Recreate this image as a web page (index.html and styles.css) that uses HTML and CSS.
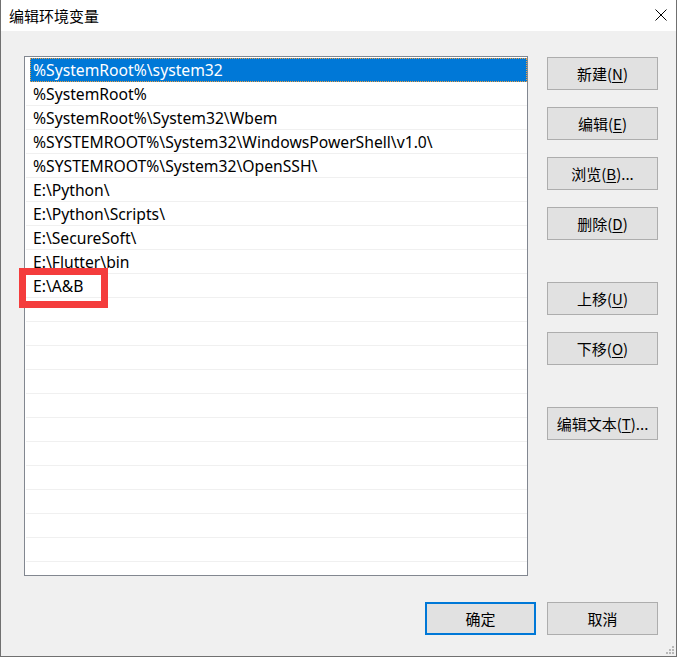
FILE: index.html
```html
<!DOCTYPE html>
<html lang="zh-CN">
<head>
<meta charset="utf-8">
<title>编辑环境变量</title>
<link rel="stylesheet" href="styles.css">
</head>
<body>
<div class="window">
  <div class="titlebar">
    <span class="title">编辑环境变量</span>
    <svg class="close" width="12" height="12" viewBox="0 0 12 12"><path d="M0.5 0.5 L11.5 11.5 M11.5 0.5 L0.5 11.5" stroke="#000" stroke-width="1" fill="none"/></svg>
  </div>
  <div class="content">
    <div class="main">
      <div class="list">
        <div class="row selected"><span class="cell">%SystemRoot%\system32</span></div>
        <div class="row"><span class="cell">%SystemRoot%</span></div>
        <div class="row"><span class="cell">%SystemRoot%\System32\Wbem</span></div>
        <div class="row"><span class="cell">%SYSTEMROOT%\System32\WindowsPowerShell\v1.0\</span></div>
        <div class="row"><span class="cell">%SYSTEMROOT%\System32\OpenSSH\</span></div>
        <div class="row"><span class="cell">E:\Python\</span></div>
        <div class="row"><span class="cell">E:\Python\Scripts\</span></div>
        <div class="row"><span class="cell">E:\SecureSoft\</span></div>
        <div class="row"><span class="cell">E:\Flutter\bin</span></div>
        <div class="row"><span class="cell">E:\A&amp;B</span></div>
        <div class="row"><span class="cell"></span></div>
        <div class="row"><span class="cell"></span></div>
        <div class="row"><span class="cell"></span></div>
        <div class="row"><span class="cell"></span></div>
        <div class="row"><span class="cell"></span></div>
        <div class="row"><span class="cell"></span></div>
        <div class="row"><span class="cell"></span></div>
        <div class="row"><span class="cell"></span></div>
        <div class="row"><span class="cell"></span></div>
        <div class="row"><span class="cell"></span></div>
        <div class="row"><span class="cell"></span></div>
      </div>
      <div class="side">
        <button class="btn">新建(<u>N</u>)</button>
        <button class="btn">编辑(<u>E</u>)</button>
        <button class="btn">浏览(<u>B</u>)...</button>
        <button class="btn">删除(<u>D</u>)</button>
        <button class="btn gap-big">上移(<u>U</u>)</button>
        <button class="btn">下移(<u>O</u>)</button>
        <button class="btn gap-big">编辑文本(<u>T</u>)...</button>
      </div>
    </div>
    <div class="footer">
      <button class="btn primary">确定</button>
      <button class="btn">取消</button>
    </div>
  </div>
  <div class="highlight"></div>
  <svg class="grip" width="10" height="10" viewBox="0 0 10 10">
    <rect x="7" y="1" width="2" height="2" fill="#b8b8b8"/>
    <rect x="4" y="4" width="2" height="2" fill="#b8b8b8"/>
    <rect x="7" y="4" width="2" height="2" fill="#b8b8b8"/>
    <rect x="1" y="7" width="2" height="2" fill="#b8b8b8"/>
    <rect x="4" y="7" width="2" height="2" fill="#b8b8b8"/>
    <rect x="7" y="7" width="2" height="2" fill="#b8b8b8"/>
  </svg>
</div>
</body>
</html>
```

FILE: styles.css
```css
* { box-sizing: border-box; }
html, body { margin: 0; padding: 0; }
body {
  width: 677px;
  height: 657px;
  overflow: hidden;
  background: #f0f0f0;
  font-family: "Noto Sans", "Noto Sans CJK SC", sans-serif;
  color: #000;
}
.window {
  position: relative;
  width: 677px;
  height: 657px;
  border-left: 1px solid #707070;
  border-right: 1px solid #707070;
  border-bottom: 1px solid #707070;
  background: #f0f0f0;
  display: flex;
  flex-direction: column;
}
.titlebar {
  height: 31px;
  flex: none;
  background: #fff;
  display: flex;
  align-items: center;
  justify-content: space-between;
  padding: 0 9px 0 8px;
}
.title {
  font-family: "Noto Sans CJK SC", sans-serif;
  font-size: 15px;
  line-height: 31px;
  margin-top: -1px;
}
.close { display: block; margin-bottom: 1px; }
.content {
  flex: 1;
  padding: 25px 18px 0 23px;
  display: flex;
  flex-direction: column;
}
.main {
  display: flex;
  gap: 19px;
}
.list {
  width: 504px;
  height: 520px;
  border: 1px solid #828790;
  background: #fff;
  padding-top: 1px;
  overflow: hidden;
}
.row {
  height: 24px;
  margin-left: 1px;
  border-bottom: 1px solid #f0f0f0;
  display: flex;
}
.cell {
  flex: 1;
  margin-left: 4px;
  padding-left: 3px;
  padding-top: 2px;
  font-size: 15.7px;
  line-height: 21px;
  white-space: nowrap;
}
.row.selected {
  border-bottom-color: transparent;
  height: 24px;
}
.row.selected .cell {
  background: #0078d7;
  color: #fff;
  height: 24px;
  border: 1px dotted #f0a040;
  padding-left: 2px;
  padding-top: 1px;
  line-height: 21px;
}
.side {
  display: flex;
  flex-direction: column;
  gap: 17px;
  padding-top: 1px;
}
.btn {
  width: 111px;
  height: 33px;
  border: 1px solid #adadad;
  background: #e1e1e1;
  font-family: "Noto Sans CJK SC", sans-serif;
  font-size: 15px;
  color: #000;
  padding: 0;
  line-height: 31px;
  text-align: center;
}
.btn u { text-underline-offset: 2px; }
.gap-big { margin-top: 25px; }
.footer {
  margin-top: 26px;
  display: flex;
  justify-content: flex-end;
  gap: 11px;
}
.btn.primary {
  border: 2px solid #0078d7;
  line-height: 29px;
}
.highlight {
  position: absolute;
  left: 18px;
  top: 268px;
  width: 89px;
  height: 40px;
  border: 7px solid #f43c3c;
}
.grip {
  position: absolute;
  right: 1px;
  bottom: 1px;
}
```
